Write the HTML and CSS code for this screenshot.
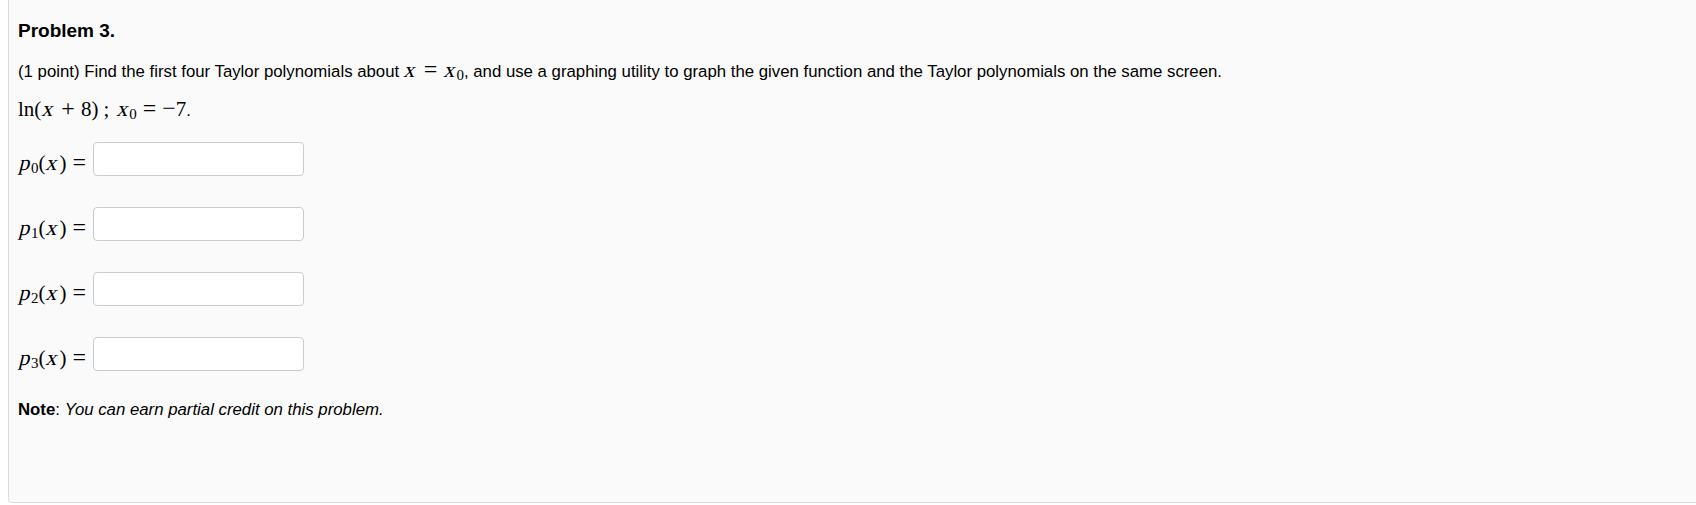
FILE: index.html
```html
<!DOCTYPE html>
<html lang="en">
<head>
  <meta charset="UTF-8">
  <title>Problem 3</title>
  <link rel="stylesheet" href="styles.css">
</head>
<body>

<div class="problem">
  <h3 class="head">Problem 3.</h3>

  <p class="line">(1 point) Find the first four Taylor polynomials about <span class="math"><i>x</i><span class="rel">=</span><i>x</i><sub>0</sub></span>, and use a graphing utility to graph the given function and the Taylor polynomials on the same screen.</p>

  <p class="line second"><span class="math">ln(<i>x</i><span class="bin">+</span>8)<span class="semi">;</span><i>x</i><sub>0</sub><span class="rel">=</span><span class="neg">&minus;</span>7</span>.</p>

  <div class="answers">
    <div class="answer">
      <span class="math label"><i>p</i><sub>0</sub>(<i>x</i>)<span class="rel">=</span></span>
      <input class="box" type="text">
    </div>
    <div class="answer">
      <span class="math label"><i>p</i><sub>1</sub>(<i>x</i>)<span class="rel">=</span></span>
      <input class="box" type="text">
    </div>
    <div class="answer">
      <span class="math label"><i>p</i><sub>2</sub>(<i>x</i>)<span class="rel">=</span></span>
      <input class="box" type="text">
    </div>
    <div class="answer">
      <span class="math label"><i>p</i><sub>3</sub>(<i>x</i>)<span class="rel">=</span></span>
      <input class="box" type="text">
    </div>
  </div>

  <p class="line note"><b>Note</b>: <i>You can earn partial credit on this problem.</i></p>
</div>

</body>
</html>
```

FILE: styles.css
```css
body {
  margin: 0;
  background-color: #fff;
  color: #000;
  font-family: "Liberation Sans", Arial, sans-serif;
}

.problem {
  margin-left: 8px;
  height: 503px;
  box-sizing: border-box;
  padding: 20px 0 0 9px;
  background-color: #fafafa;
  border-left: 1px solid #dcdcdc;
  border-bottom: 1px solid #dcdcdc;
  border-bottom-left-radius: 4px;
}

.head {
  margin: 0;
  font-size: 19px;
  line-height: 22px;
  font-weight: bold;
}

.line {
  margin: 20px 0 0;
  font-size: 16.8px;
  line-height: 20px;
}

.line.second {
  margin-top: 19px;
}

/* math, roughly like MathJax output */
.math {
  font-family: "Liberation Serif", "Times New Roman", serif;
  font-size: 21px;
  line-height: 0;
  white-space: nowrap;
}

/* the serif italic face is not slanted here, so lean the letters */
.math i {
  display: inline-block;
  font-style: normal;
  font-size: 22px;
  line-height: 14px;
  margin: 0 1.5px;
  transform: skewX(-14deg);
}

.math sub {
  font-size: 15px;
  line-height: 0;
  vertical-align: -3px;
  margin-left: -1px;
}

.rel, .bin, .neg {
  font-size: 24px;
  line-height: 0;
}

.rel {
  margin: 0 6px;
}

.bin {
  margin: 0 6px;
}

.semi {
  margin: 0 7px 0 5px;
}

.answers {
  margin-top: 21px;
}

.answer {
  display: flex;
  align-items: flex-start;
  height: 34px;
  margin-bottom: 31px;
}

.answer:last-child {
  margin-bottom: 0;
}

.label {
  width: 75px;
  line-height: 34px;
  padding-top: 4px;
}

.box {
  width: 211px;
  height: 34px;
  box-sizing: border-box;
  margin: 0;
  padding: 4px 6px;
  border: 1px solid #ccc;
  border-radius: 4px;
  background-color: #fff;
  font-size: 16px;
}

.line.note {
  margin-top: 29px;
}
```
